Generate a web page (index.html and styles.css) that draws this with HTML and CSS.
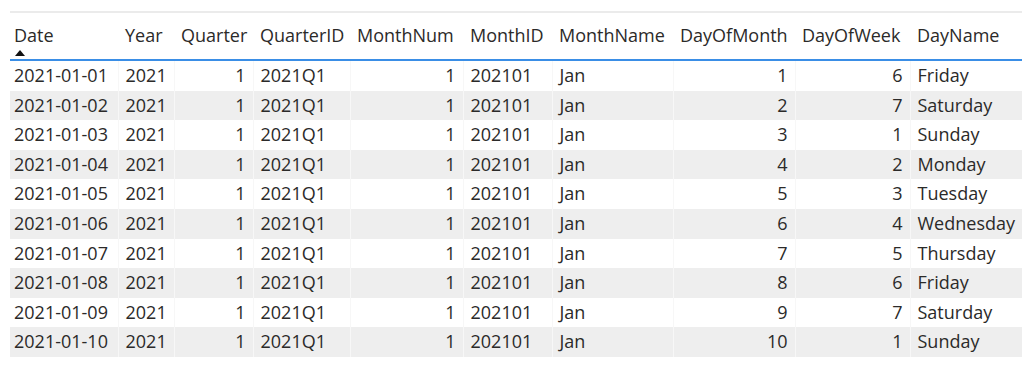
FILE: index.html
```html
<!DOCTYPE html>
<html lang="en">
<head>
    <meta charset="UTF-8">
    <title>Date Table</title>
    <link rel="stylesheet" href="styles.css">
</head>
<body>
    <table class="grid">
        <colgroup>
            <col style="width: 108px">
            <col style="width: 56px">
            <col style="width: 79px">
            <col style="width: 97px">
            <col style="width: 113px">
            <col style="width: 89px">
            <col style="width: 121px">
            <col style="width: 122px">
            <col style="width: 115px">
            <col style="width: 112px">
        </colgroup>
        <thead>
            <tr>
                <th class="first">Date<span class="sort"></span></th>
                <th>Year</th>
                <th>Quarter</th>
                <th>QuarterID</th>
                <th>MonthNum</th>
                <th>MonthID</th>
                <th>MonthName</th>
                <th>DayOfMonth</th>
                <th>DayOfWeek</th>
                <th>DayName</th>
            </tr>
        </thead>
        <tbody id="rows"></tbody>
    </table>

    <script>
        const days = [
            [6, 'Friday'], [7, 'Saturday'], [1, 'Sunday'], [2, 'Monday'], [3, 'Tuesday'],
            [4, 'Wednesday'], [5, 'Thursday'], [6, 'Friday'], [7, 'Saturday'], [1, 'Sunday']
        ];
        const tbody = document.getElementById('rows');

        days.forEach((d, i) => {
            const day = i + 1;
            const date = '2021-01-' + String(day).padStart(2, '0');
            const tr = document.createElement('tr');
            tr.innerHTML =
                '<td class="first">' + date + '</td>' +
                '<td>2021</td>' +
                '<td class="num">1</td>' +
                '<td>2021Q1</td>' +
                '<td class="num">1</td>' +
                '<td>202101</td>' +
                '<td>Jan</td>' +
                '<td class="num">' + day + '</td>' +
                '<td class="num">' + d[0] + '</td>' +
                '<td>' + d[1] + '</td>';
            tbody.appendChild(tr);
        });
    </script>
</body>
</html>
```

FILE: styles.css
```css
body {
    margin: 0;
    background: white;
    font-family: "Open Sans", "Noto Sans", sans-serif;
    color: #2b2a29;
}
.grid {
    margin: 11px 0 0 10px;
    width: 1012px;
    table-layout: fixed;
    border-collapse: collapse;
    border-top: 2px solid #ebebeb;
    font-size: 18px;
}
th {
    height: 48px;
    padding: 10px 7px 0;
    box-sizing: border-box;
    vertical-align: top;
    text-align: left;
    font-weight: normal;
    line-height: 24px;
    white-space: nowrap;
    border-bottom: 2px solid #3a8ee6;
}
.sort {
    display: block;
    width: 0;
    height: 0;
    margin: 3px 0 0 1px;
    border-left: 5.5px solid transparent;
    border-right: 5.5px solid transparent;
    border-bottom: 6px solid #111;
}
td {
    height: 29.6px;
    padding: 0 7px;
    line-height: 29.6px;
    white-space: nowrap;
    border-left: 1px solid #f7f7f7;
}
th.first,
td.first {
    padding-left: 4px;
    border-left: none;
}
td.num {
    text-align: right;
}
tbody tr:nth-child(even) {
    background: #eeeeee;
}
```
